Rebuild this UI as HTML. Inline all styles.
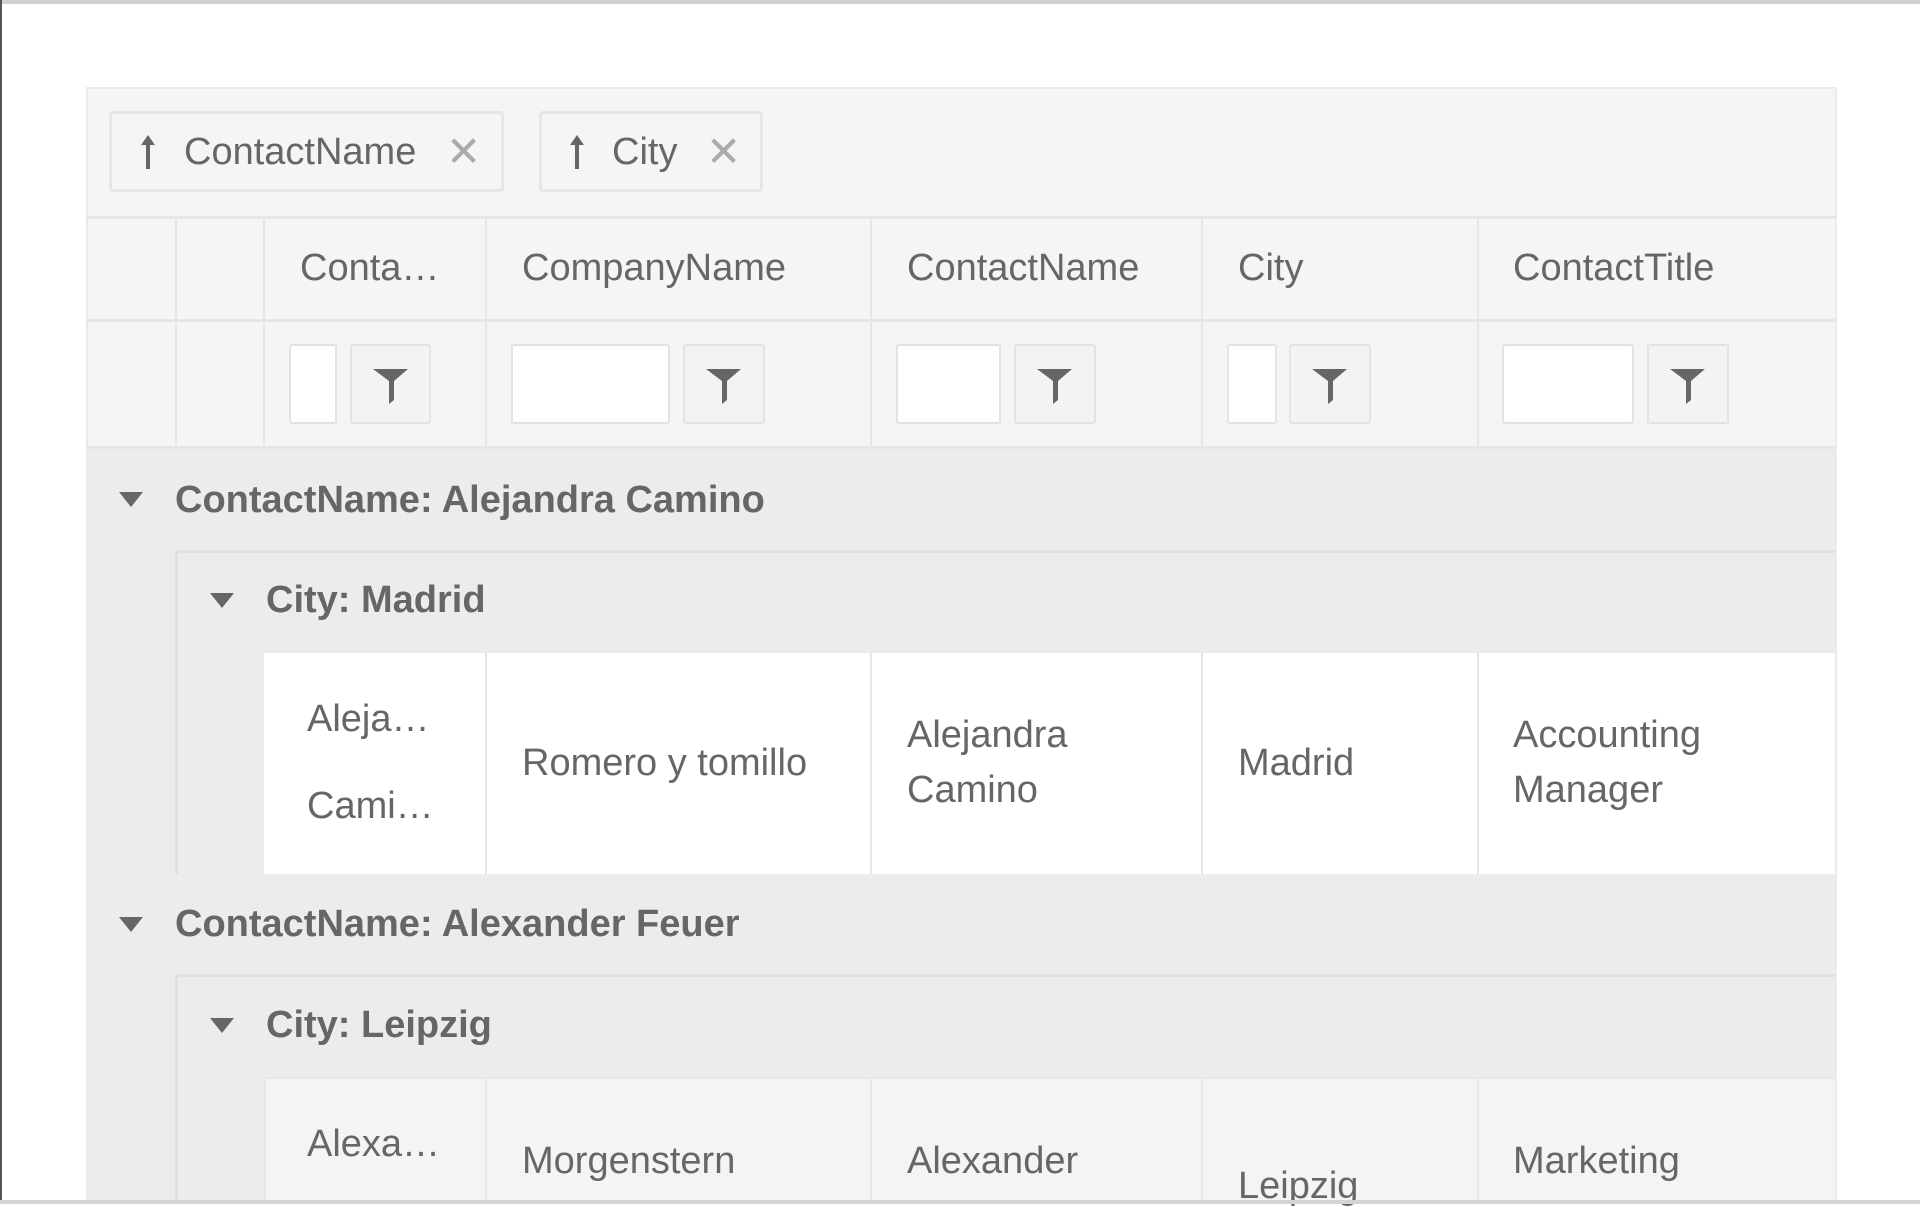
<!DOCTYPE html>
<html><head><meta charset="utf-8"><style>
*{margin:0;padding:0;box-sizing:border-box}
body{width:1920px;height:1204px;position:relative;overflow:hidden;background:#fff;font-family:"Liberation Sans",Arial,sans-serif;color:#666;font-size:38px}
div,span{position:absolute}
.t{line-height:1;white-space:nowrap;transform:translateY(-50%)}
.b{font-weight:bold}
.vl{width:2px;background:#e6e6e6}
.hl{height:2px;background:#e6e6e6}
.inp{background:#fff;border:2px solid #e3e3e3;border-radius:3px}
.btn{background:#f3f3f3;border:2px solid #e3e3e3;border-radius:3px}
.chip{background:#f5f5f5;border:3px solid #e6e6e6;border-radius:4px;height:81px;top:111px}
</style></head><body>
<div style="left:0;top:0;width:1920px;height:4px;background:#d0d0d0"></div>
<div style="left:0;top:0;width:2px;height:1204px;background:#555"></div>
<div style="left:86px;top:87px;width:1751px;height:1117px;background:#f5f5f5;border:2px solid #ebebeb"></div>
<div class="chip" style="left:109px;width:395px"></div>
<div class="chip" style="left:539px;width:224px"></div>
<span class="t" style="left:184px;top:152px">ContactName</span>
<span class="t" style="left:446px;top:152px;color:#aaa;font-size:42px">✕</span>
<span class="t" style="left:612px;top:152px">City</span>
<span class="t" style="left:706px;top:152px;color:#aaa;font-size:42px">✕</span>
<div class="hl" style="left:86px;top:216px;width:1750px;height:3px"></div>
<div class="hl" style="left:86px;top:319px;width:1750px;height:3px"></div>
<div class="hl" style="left:86px;top:446px;width:1750px;height:3px"></div>
<div class="vl" style="left:175px;top:218px;height:230px"></div>
<div class="vl" style="left:263px;top:218px;height:230px"></div>
<div class="vl" style="left:485px;top:218px;height:230px"></div>
<div class="vl" style="left:870px;top:218px;height:230px"></div>
<div class="vl" style="left:1201px;top:218px;height:230px"></div>
<div class="vl" style="left:1477px;top:218px;height:230px"></div>
<span class="t" style="left:300px;top:268px">Conta…</span>
<span class="t" style="left:522px;top:268px">CompanyName</span>
<span class="t" style="left:907px;top:268px">ContactName</span>
<span class="t" style="left:1238px;top:268px">City</span>
<span class="t" style="left:1513px;top:268px">ContactTitle</span>
<div class="inp" style="left:289px;top:344px;width:48px;height:80px"></div>
<div class="btn" style="left:350px;top:344px;width:81px;height:80px"></div>
<div class="inp" style="left:511px;top:344px;width:159px;height:80px"></div>
<div class="btn" style="left:683px;top:344px;width:82px;height:80px"></div>
<div class="inp" style="left:896px;top:344px;width:105px;height:80px"></div>
<div class="btn" style="left:1014px;top:344px;width:82px;height:80px"></div>
<div class="inp" style="left:1227px;top:344px;width:50px;height:80px"></div>
<div class="btn" style="left:1289px;top:344px;width:82px;height:80px"></div>
<div class="inp" style="left:1502px;top:344px;width:132px;height:80px"></div>
<div class="btn" style="left:1647px;top:344px;width:82px;height:80px"></div>
<div style="left:88px;top:449px;width:1747px;height:755px;background:#ececec"></div>
<span class="t b" style="left:175px;top:500px">ContactName: Alejandra Camino</span>
<div style="left:175px;top:550px;width:1660px;height:324px;background:#ececec;border-left:3px solid #e0e0e0;border-top:3px solid #e0e0e0"></div>
<span class="t b" style="left:266px;top:600px">City: Madrid</span>
<div style="left:264px;top:653px;width:1571px;height:221px;background:#fff"></div>
<div class="vl" style="left:485px;top:653px;height:221px"></div>
<div class="vl" style="left:870px;top:653px;height:221px"></div>
<div class="vl" style="left:1201px;top:653px;height:221px"></div>
<div class="vl" style="left:1477px;top:653px;height:221px"></div>
<span class="t" style="left:307px;top:719px">Aleja…</span>
<span class="t" style="left:307px;top:806px">Cami…</span>
<span class="t" style="left:522px;top:763px">Romero y tomillo</span>
<span class="t" style="left:907px;top:735px">Alejandra</span>
<span class="t" style="left:907px;top:790px">Camino</span>
<span class="t" style="left:1238px;top:763px">Madrid</span>
<span class="t" style="left:1513px;top:735px">Accounting</span>
<span class="t" style="left:1513px;top:790px">Manager</span>
<span class="t b" style="left:175px;top:924px">ContactName: Alexander Feuer</span>
<div style="left:175px;top:974px;width:1660px;height:230px;background:#ececec;border-left:3px solid #e0e0e0;border-top:3px solid #e0e0e0"></div>
<span class="t b" style="left:266px;top:1025px">City: Leipzig</span>
<div style="left:264px;top:1077px;width:1571px;height:127px;background:#f4f4f4;border-top:2px solid #e6e6e6;border-left:2px solid #e6e6e6"></div>
<div class="vl" style="left:485px;top:1077px;height:127px"></div>
<div class="vl" style="left:870px;top:1077px;height:127px"></div>
<div class="vl" style="left:1201px;top:1077px;height:127px"></div>
<div class="vl" style="left:1477px;top:1077px;height:127px"></div>
<span class="t" style="left:307px;top:1144px">Alexa…</span>
<span class="t" style="left:522px;top:1161px">Morgenstern</span>
<span class="t" style="left:907px;top:1161px">Alexander</span>
<span class="t" style="left:1238px;top:1186px">Leipzig</span>
<span class="t" style="left:1513px;top:1161px">Marketing</span>
<svg style="position:absolute;left:0;top:0" width="1920" height="1204">
<g fill="#666">
<path id="f" d="M373 369h35l-14 12v19l-5 4v-23z"/>
<use href="#f" x="333"/><use href="#f" x="664"/><use href="#f" x="939"/><use href="#f" x="1297"/>
<path d="M119 492h24l-12 15z"/><path d="M210 593h24l-12 15z"/>
<path d="M119 917h24l-12 15z"/><path d="M210 1018h24l-12 15z"/>
<path d="M148 135l-7 10h5v24h4v-24h5z"/><path d="M577 135l-7 10h5v24h4v-24h5z"/>
</g></svg>
<div style="left:0;top:1200px;width:1920px;height:4px;background:#d4d4d4"></div>
</body></html>
